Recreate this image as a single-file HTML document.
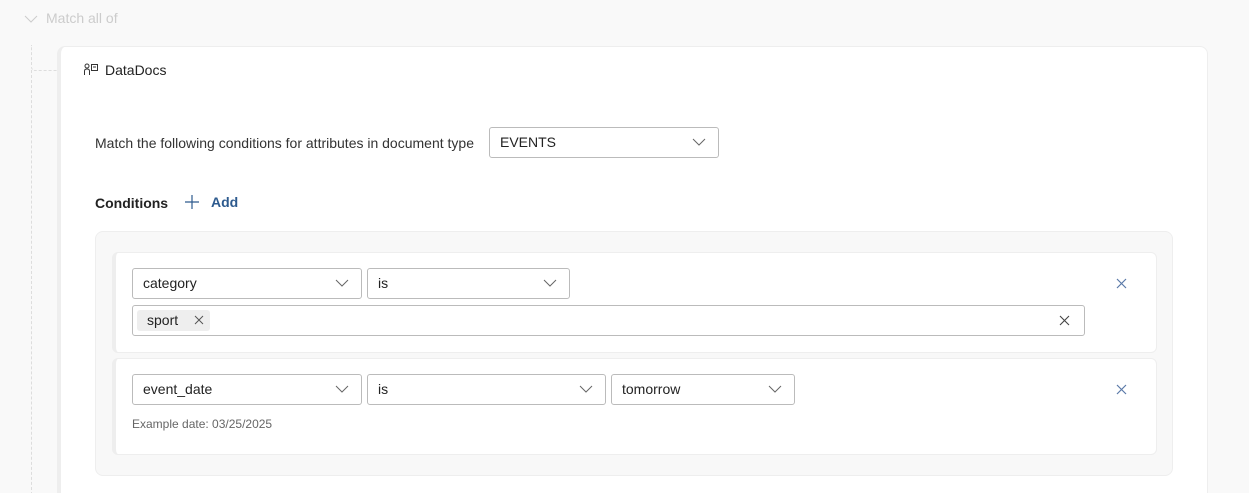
<html style="overflow:hidden;height:493px"><head><style>
body{margin:0;width:1249px;height:493px;background:#f9f9f9;font-family:"Liberation Sans",sans-serif;position:relative;overflow:hidden;color:#222}
.a{position:absolute}
.sel{position:absolute;box-sizing:border-box;border:1px solid #bbb;border-radius:3px;background:#fff;height:31px;font-size:14px;line-height:29px;padding-left:10px;color:#222}
.sel svg{position:absolute;right:12px;top:10px}
</style></head><body>
<div class="a" style="left:24px;top:10px;font-size:14px;color:#ccc"><svg width="14" height="10" style="vertical-align:middle;margin-right:8px"><path d="M1 2l6 6 6-6" stroke="#ccc" fill="none"/></svg>Match all of</div>
<div class="a" style="left:31px;top:45px;width:26px;height:25px;border-left:1px dashed #ddd;border-bottom:1px dashed #ddd;border-bottom-left-radius:4px"></div>
<div class="a" style="left:31px;top:70px;height:430px;border-left:1px dashed #ddd"></div>
<div class="a" style="left:57px;top:46px;width:1151px;height:460px;background:#fff;border:1px solid #eee;border-left:4px solid #eee;border-radius:8px;box-sizing:border-box"></div>
<div class="a" style="left:83px;top:62px;font-size:14px"><svg width="16" height="14" style="vertical-align:-2px;margin-right:6px"><circle cx="4" cy="3" r="2" fill="none" stroke="#333"/><path d="M1.5 12V8q0-2 2.5-2t2.5 2v4" fill="none" stroke="#333"/><rect x="8.5" y="1.5" width="6" height="6" fill="none" stroke="#333"/><path d="M10 4h3" stroke="#333"/></svg>DataDocs</div>
<div class="a" style="left:95px;top:135px;font-size:14px;color:#333">Match the following conditions for attributes in document type</div>
<div class="sel" style="left:489px;top:127px;width:230px">EVENTS<svg width="14" height="9"><path d="M1 1l6 6 6-6" stroke="#666" fill="none"/></svg></div>
<div class="a" style="left:95px;top:195px;font-size:14px;font-weight:bold;color:#222">Conditions</div>
<div class="a" style="left:184px;top:194px;font-size:14px;font-weight:bold;color:#2d5a8e"><svg width="16" height="16" style="vertical-align:-3px;margin-right:11px"><path d="M8 1v14M1 8h14" stroke="#2d5a8e" stroke-width="1.2"/></svg>Add</div>
<div class="a" style="left:95px;top:231px;width:1078px;height:245px;box-sizing:border-box;background:#f8f8f8;border:1px solid #eee;border-radius:8px"></div>
<div class="a" style="left:112px;top:252px;width:1045px;height:101px;box-sizing:border-box;background:#fff;border:1px solid #eee;border-left:4px solid #eee;border-radius:6px"></div>
<div class="a" style="left:112px;top:358px;width:1045px;height:97px;box-sizing:border-box;background:#fff;border:1px solid #eee;border-left:4px solid #eee;border-radius:6px"></div>
<div class="sel" style="left:132px;top:268px;width:230px">category<svg width="14" height="9"><path d="M1 1l6 6 6-6" stroke="#666" fill="none"/></svg></div>
<div class="sel" style="left:367px;top:268px;width:203px">is<svg width="14" height="9"><path d="M1 1l6 6 6-6" stroke="#666" fill="none"/></svg></div>
<div class="sel" style="left:132px;top:305px;width:953px"></div>
<div class="a" style="left:137px;top:310px;width:73px;height:21px;background:#eee;border-radius:3px;font-size:14px;line-height:21px;box-sizing:border-box;padding-left:10px">sport<svg width="10" height="10" style="position:absolute;left:57px;top:5px"><path d="M1 1l8 8M9 1l-8 8" stroke="#555"/></svg></div>
<svg class="a" style="left:1059px;top:315px" width="11" height="11"><path d="M1 1l9 9M10 1l-9 9" stroke="#444" stroke-width="1.1"/></svg>
<svg class="a" style="left:1116px;top:278px" width="11" height="11"><path d="M1 1l9 9M10 1l-9 9" stroke="#5a7aa8" stroke-width="1.2"/></svg>
<div class="sel" style="left:132px;top:374px;width:230px">event_date<svg width="14" height="9"><path d="M1 1l6 6 6-6" stroke="#666" fill="none"/></svg></div>
<div class="sel" style="left:367px;top:374px;width:239px">is<svg width="14" height="9"><path d="M1 1l6 6 6-6" stroke="#666" fill="none"/></svg></div>
<div class="sel" style="left:611px;top:374px;width:184px">tomorrow<svg width="14" height="9"><path d="M1 1l6 6 6-6" stroke="#666" fill="none"/></svg></div>
<svg class="a" style="left:1116px;top:384px" width="11" height="11"><path d="M1 1l9 9M10 1l-9 9" stroke="#5a7aa8" stroke-width="1.2"/></svg>
<div class="a" style="left:132px;top:417px;font-size:12px;color:#666">Example date: 03/25/2025</div>
</body></html>
